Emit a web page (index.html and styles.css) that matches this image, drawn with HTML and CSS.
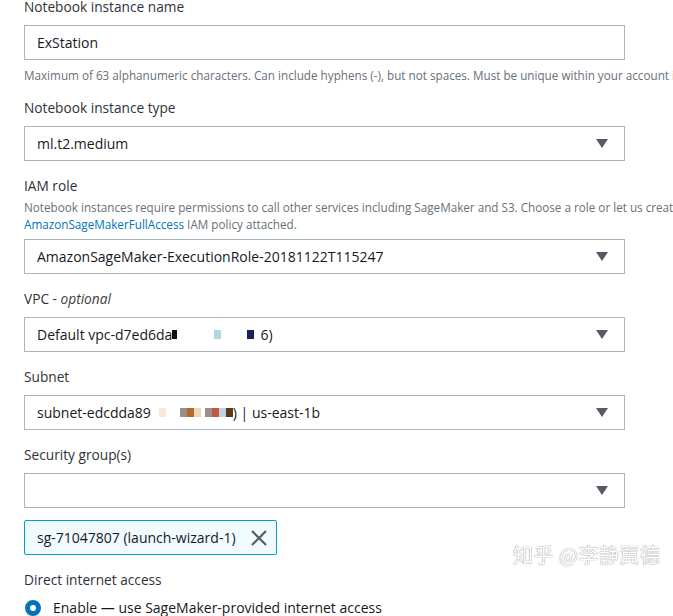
FILE: index.html
```html
<!DOCTYPE html>
<html>
<head>
<meta charset="utf-8">
<link rel="stylesheet" href="styles.css">
</head>
<body>
<div class="form">
  <div class="field first">
    <div class="label">Notebook instance name</div>
    <div class="control input">ExStation</div>
    <div class="hint single">Maximum of 63 alphanumeric characters. Can include hyphens (-), but not spaces. Must be unique within your account in an AWS Region.</div>
  </div>

  <div class="field">
    <div class="label">Notebook instance type</div>
    <div class="control select"><span class="val">ml.t2.medium</span><span class="caret"></span></div>
  </div>

  <div class="field">
    <div class="label">IAM role</div>
    <div class="hint double">Notebook instances require permissions to call other services including SageMaker and S3. Choose a role or let us create a role with the<br><a class="link">AmazonSageMakerFullAccess</a> IAM policy attached.</div>
    <div class="control select"><span class="val">AmazonSageMaker-ExecutionRole-20181122T115247</span><span class="caret"></span></div>
  </div>

  <div class="field">
    <div class="label">VPC - <i>optional</i></div>
    <div class="control select"><span class="val">Default vpc-d7ed6da<span class="blk b-black"></span><span class="gap g40"></span><span class="blk b-lblue"></span><span class="gap g26"></span><span class="blk b-navy"></span><span class="gap g6"></span>6)</span><span class="caret"></span></div>
  </div>

  <div class="field">
    <div class="label">Subnet</div>
    <div class="control select"><span class="val">subnet-edcdda89<span class="gap g8"></span><span class="blk b-cream"></span><span class="gap g14"></span><span class="blk b-grey"></span><span class="blk b-brown"></span><span class="blk b-cream2"></span><span class="gap g4"></span><span class="blk b-grey"></span><span class="blk b-rust"></span><span class="blk b-sky"></span><span class="blk b-dark"></span>) | us-east-1b</span><span class="caret"></span></div>
  </div>

  <div class="field">
    <div class="label">Security group(s)</div>
    <div class="control select"><span class="val"></span><span class="caret"></span></div>
    <div class="token"><span>sg-71047807 (launch-wizard-1)</span>
      <svg class="x" width="18" height="18" viewBox="0 0 18 18"><path d="M2 2 L16 16 M16 2 L2 16" stroke="#545b64" stroke-width="2.2" fill="none"/></svg>
    </div>
  </div>

  <div class="field">
    <div class="label">Direct internet access</div>
    <div class="radio-row"><span class="radio"></span><span>Enable — use SageMaker-provided internet access</span></div>
  </div>
</div>
<div class="watermark">知乎 @李静翼德</div>
</body>
</html>
```
FILE: styles.css
```css
html, body { margin: 0; padding: 0; background: #fff; overflow: hidden; }
body {
  width: 673px; height: 616px; position: relative;
  font-family: "Open Sans", "Noto Sans", "Noto Sans CJK SC", sans-serif;
  color: #16191f;
}
.form {
  display: flex; flex-direction: column; gap: 16px;
  padding-left: 24px; width: 601px; margin-top: -2px;
}
.field { display: flex; flex-direction: column; }
.label { font-size: 13.7px; line-height: 18px; color: #2e3238; margin-bottom: 9px; white-space: nowrap; }
.label i { font-style: italic; color: #3a3f45; }
.control {
  box-sizing: border-box; height: 35px; border: 1px solid #aab7b8;
  display: flex; align-items: center; padding: 0 16px 0 12px;
  font-size: 14px; color: #16191f; background: #fff;
}
.select { justify-content: space-between; }
.val { white-space: nowrap; display: flex; align-items: center; }
.caret {
  width: 0; height: 0; border-left: 6.5px solid transparent; border-right: 6.5px solid transparent;
  border-top: 9px solid #545b64; margin-right: 0;
}
.hint { font-size: 11.7px; color: #687078; white-space: nowrap; width: 649px; overflow: hidden; }
.hint.single { line-height: 16px; margin-top: 7px; }
.hint.double { line-height: 17px; margin-top: -5px; margin-bottom: 6px; }
.link { color: #0073bb; text-decoration: none; }
.blk { display: inline-block; width: 7px; height: 9px; }
.gap { display: inline-block; height: 9px; }
.g40 { width: 37px; } .g26 { width: 26px; } .g6 { width: 6px; } .g8 { width: 8px; } .g14 { width: 14px; } .g4 { width: 4px; }
.b-black { background: #111; width: 5px; }
.b-lblue { background: #b4d6e0; }
.b-navy { background: #1b1f5a; }
.b-cream { background: #f6e9d4; }
.b-grey { background: #9a8f8a; }
.b-brown { background: #b36b2b; }
.b-cream2 { background: #f1d8b8; }
.b-rust { background: #c2593f; }
.b-sky { background: #bcd3e6; }
.b-dark { background: #5a3b1d; }
.token {
  margin-top: 12px; align-self: flex-start; box-sizing: border-box;
  height: 35px; width: 253px; border: 1px solid #00a1c9; background: #f1faff;
  display: flex; align-items: center; justify-content: space-between;
  padding: 0 8px 0 12px; font-size: 14px; color: #16191f; border-radius: 2px;
}
.radio-row { display: flex; align-items: center; gap: 12px; font-size: 14px; margin-top: 0px; margin-left: 1px; }
.radio {
  box-sizing: border-box; width: 16px; height: 16px; border-radius: 50%;
  border: 5px solid #0073bb; background: #fff;
}
.watermark {
  position: absolute; left: 513px; top: 543px; font-size: 20px; line-height: 24px;
  color: #fff; letter-spacing: 0.5px;
  text-shadow: 0 0 1px #999, 0 0 1px #999;
  font-family: "Noto Sans CJK SC", sans-serif;
}
```
